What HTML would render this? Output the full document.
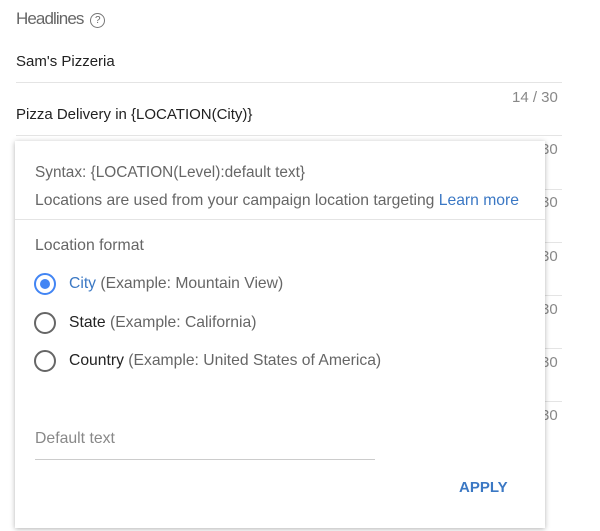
<!DOCTYPE html>
<html><head><style>
body{margin:0;width:600px;height:531px;background:#fff;font-family:"Liberation Sans",sans-serif;position:relative;overflow:hidden}
.a{position:absolute;white-space:nowrap}
.g{color:#666}
.ln{position:absolute;height:1px;background:#e4e4e4}
.r{position:absolute;left:34px;width:18px;height:18px;border:2px solid #666;border-radius:50%}
.n{position:absolute;left:541px;font-size:15px;color:#888}
</style></head><body>
<div class="a g" style="left:16px;top:9px;font-size:17px;letter-spacing:-0.9px">Headlines <span style="display:inline-block;width:13px;height:13px;border:1.3px solid #777;border-radius:50%;font-size:10px;text-align:center;line-height:13px;vertical-align:1px;margin-left:3px;letter-spacing:0">?</span></div>
<div class="a" style="left:16px;top:53px;font-size:15px;color:#222">Sam's Pizzeria</div>
<div class="ln" style="left:16px;top:82px;width:546px"></div>
<div class="a" style="left:512px;top:89px;font-size:15px;color:#888">14 / 30</div>
<div class="a" style="left:16px;top:106px;font-size:15px;color:#222">Pizza Delivery in {LOCATION(City)}</div>
<div class="ln" style="left:16px;top:135px;width:546px"></div>
<div class="n" style="top:141px">30</div>
<div class="n" style="top:194px">30</div>
<div class="n" style="top:248px">30</div>
<div class="n" style="top:301px">30</div>
<div class="n" style="top:354px">30</div>
<div class="n" style="top:407px">30</div>
<div class="ln" style="left:545px;top:189px;width:17px"></div>
<div class="ln" style="left:545px;top:242px;width:17px"></div>
<div class="ln" style="left:545px;top:295px;width:17px"></div>
<div class="ln" style="left:545px;top:348px;width:17px"></div>
<div class="ln" style="left:545px;top:401px;width:17px"></div>
<div style="position:absolute;left:15px;top:141px;width:530px;height:387px;background:#fff;box-shadow:0 1px 5px rgba(0,0,0,.3)">
<div class="a g" style="left:20px;top:23px;font-size:15.4px">Syntax: {LOCATION(Level):default text}</div>
<div class="a g" style="left:20px;top:51px;font-size:15.7px">Locations are used from your campaign location targeting <span style="color:#3b78c4">Learn more</span></div>
<div class="ln" style="left:0;top:78px;width:530px"></div>
<div class="a g" style="left:20px;top:96px;font-size:15.8px">Location format</div>
<div class="r" style="top:132px;border-color:#4285f4;left:19px"><div style="margin:4px;width:10px;height:10px;border-radius:50%;background:#4285f4"></div></div>
<div class="a" style="left:54px;top:134px;font-size:15.7px;color:#666"><span style="color:#3b78c4">City</span> (Example: Mountain View)</div>
<div class="r" style="top:171px;left:19px"></div>
<div class="a" style="left:54px;top:173px;font-size:15.7px;color:#666"><span style="color:#222">State</span> (Example: California)</div>
<div class="r" style="top:209px;left:19px"></div>
<div class="a" style="left:54px;top:211px;font-size:15.7px;color:#666"><span style="color:#222">Country</span> (Example: United States of America)</div>
<div class="a" style="left:20px;top:289px;font-size:15.8px;color:#888">Default text</div>
<div style="position:absolute;left:20px;top:318px;width:340px;height:1px;background:#ccc"></div>
<div class="a" style="left:444px;top:338px;font-size:15px;font-weight:bold;color:#3b78c4">APPLY</div>
</div>
</body></html>
